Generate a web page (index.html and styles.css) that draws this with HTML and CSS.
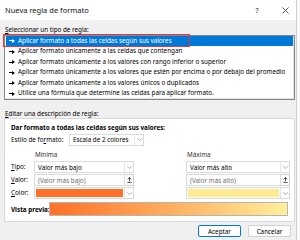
FILE: index.html
```html
<!DOCTYPE html>
<html lang="es">
<head>
<meta charset="utf-8">
<title>Nueva regla de formato</title>
<link rel="stylesheet" href="styles.css">
</head>
<body>
<div class="dlg">
  <div class="titlebar">
    <span class="title">Nueva regla de formato</span>
    <span class="help">?</span>
    <span class="close"><svg width="7" height="7" viewBox="0 0 7 7"><path d="M0.5 0.5L6.5 6.5M6.5 0.5L0.5 6.5" stroke="#333" stroke-width="0.8"/></svg></span>
  </div>
  <div class="body">
    <div class="lbl lbl-top"><u>S</u>eleccionar un tipo de regla:</div>
    <div class="listwrap">
      <ul class="list">
        <li class="sel"><i class="arr"></i>Aplicar formato a todas las celdas según sus valores</li>
        <li><i class="arr"></i>Aplicar formato únicamente a las celdas que contengan</li>
        <li><i class="arr"></i>Aplicar formato únicamente a los valores con rango inferior o superior</li>
        <li><i class="arr"></i>Aplicar formato únicamente a los valores que estén por encima o por debajo del promedio</li>
        <li><i class="arr"></i>Aplicar formato únicamente a los valores únicos o duplicados</li>
        <li><i class="arr"></i>Utilice una fórmula que determine las celdas para aplicar formato.</li>
      </ul>
      <div class="mark"></div>
    </div>
    <div class="lbl lbl-edit"><u>E</u>ditar una descripción de regla:</div>
    <div class="panel">
      <div class="bold head">Dar formato a todas las celdas según sus valores:</div>
      <div class="stylerow">
        <span class="stylelbl">Estilo de fo<u>r</u>mato:</span>
        <div class="combo stylecombo"><span class="ctext">Escala de 2 colores</span><span class="drop"><svg width="5" height="3" viewBox="0 0 5 3"><path d="M0.3 0.3L2.5 2.5L4.7 0.3" fill="none" stroke="#777" stroke-width="0.6"/></svg></span></div>
      </div>
      <div class="grid">
        <span></span><span class="colhead">Mínima</span><span></span><span class="colhead">Máxima</span>

        <span class="rowlbl"><u>T</u>ipo:</span>
        <div class="combo"><span class="ctext">Valor más bajo</span><span class="drop"><svg width="5" height="3" viewBox="0 0 5 3"><path d="M0.3 0.3L2.5 2.5L4.7 0.3" fill="none" stroke="#777" stroke-width="0.6"/></svg></span></div>
        <span></span>
        <div class="combo"><span class="ctext">Valor más alto</span><span class="drop"><svg width="5" height="3" viewBox="0 0 5 3"><path d="M0.3 0.3L2.5 2.5L4.7 0.3" fill="none" stroke="#777" stroke-width="0.6"/></svg></span></div>

        <span class="rowlbl"><u>V</u>alor:</span>
        <div class="inputrow"><span class="input">(Valor más bajo)</span><span class="pick"><svg width="5" height="6" viewBox="0 0 5 6"><path d="M2.5 0.6V4.2M0.8 2.2L2.5 0.6L4.2 2.2M0.4 5.4H4.6" fill="none" stroke="#222" stroke-width="0.8"/></svg></span></div>
        <span></span>
        <div class="inputrow"><span class="input">(Valor más alto)</span><span class="pick"><svg width="5" height="6" viewBox="0 0 5 6"><path d="M2.5 0.6V4.2M0.8 2.2L2.5 0.6L4.2 2.2M0.4 5.4H4.6" fill="none" stroke="#222" stroke-width="0.8"/></svg></span></div>

        <span class="rowlbl"><u>C</u>olor:</span>
        <div class="combo colorcombo"><span class="swatch sw-min"></span><span class="drop"><svg width="5" height="3" viewBox="0 0 5 3"><path d="M0.3 0.3L2.5 2.5L4.7 0.3" fill="none" stroke="#777" stroke-width="0.6"/></svg></span></div>
        <span></span>
        <div class="combo colorcombo"><span class="swatch sw-max"></span><span class="drop"><svg width="5" height="3" viewBox="0 0 5 3"><path d="M0.3 0.3L2.5 2.5L4.7 0.3" fill="none" stroke="#777" stroke-width="0.6"/></svg></span></div>
      </div>
      <div class="previewrow">
        <span class="bold pvlbl">Vista previa:</span>
        <div class="preview"></div>
      </div>
    </div>
    <div class="buttons">
      <button class="btn primary">Aceptar</button>
      <button class="btn">Cancelar</button>
    </div>
  </div>
  <span class="grip"></span>
</div>
</body>
</html>
```

FILE: styles.css
```css
* { box-sizing: border-box; }
body {
  margin: 0;
  width: 300px;
  height: 240px;
  overflow: hidden;
  background: #fafafa;
  font-family: "Noto Sans", "Open Sans", sans-serif;
  font-size: 6.3px;
  color: #000;
}
u { text-decoration: underline; text-underline-offset: 1px; text-decoration-thickness: 0.5px; }
.dlg {
  position: relative;
  width: 297px;
  height: 240px;
  background: #f0f0f0;
  border-right: 1px solid #cfcfcf;
  display: flex;
  flex-direction: column;
}
.titlebar {
  height: 20px;
  background: #fff;
  display: flex;
  align-items: center;
  padding-left: 5px;
  font-size: 7.5px;
  color: #111;
}
.title { flex: 1; }
.help { width: 14px; text-align: center; margin-right: 14px; font-size: 7px; color: #333; }
.close { width: 14px; display: flex; justify-content: center; margin-right: 4px; }
.body {
  flex: 1;
  display: flex;
  flex-direction: column;
  padding: 0 1px 0 4px;
}
.lbl { height: 10px; line-height: 10px; padding-left: 1px; white-space: nowrap; }
.lbl-top { margin-top: 5px; }
.listwrap { position: relative; }
.list {
  list-style: none;
  margin: 0;
  padding: 0 1px;
  height: 65px;
  background: #fff;
  border: 1px solid #828790;
  box-shadow: inset -1px -1px 0 #e3e3e3;
}
.list li {
  height: 10.5px;
  line-height: 10.5px;
  padding-left: 3px;
  white-space: nowrap;
  overflow: hidden;
  display: flex;
  align-items: center;
}
.list li.sel { background: #0078d7; color: #fff; height: 9.8px; margin-bottom: 0.7px; }
.arr {
  display: inline-block;
  width: 6px;
  height: 3px;
  margin-right: 3px;
  flex: none;
  background:
    linear-gradient(currentColor, currentColor) 0 1px / 3.5px 1px no-repeat;
  position: relative;
}
.arr::after {
  content: "";
  position: absolute;
  left: 3px;
  top: -0.5px;
  border-left: 3px solid currentColor;
  border-top: 2px solid transparent;
  border-bottom: 2px solid transparent;
}
.mark {
  position: absolute;
  left: -1px;
  top: -1px;
  width: 187px;
  height: 13px;
  border: 1.3px solid #e0383d;
}
.lbl-edit { margin-top: 9px; }
.panel {
  height: 104px;
  margin-top: -1px;
  background: #fff;
  border: 1px solid #dadada;
  padding: 4px 6px 0 6px;
}
.bold { font-weight: bold; white-space: nowrap; }
.head { height: 10px; line-height: 10px; }
.stylerow { display: flex; align-items: center; height: 13px; }
.stylelbl { width: 58px; white-space: nowrap; }
.combo {
  display: flex;
  align-items: center;
  height: 12px;
  background: #fff;
  border: 1px solid #dadada;
}
.ctext { flex: 1; padding-left: 3px; white-space: nowrap; overflow: hidden; }
.drop {
  width: 9px;
  height: 100%;
  display: flex;
  align-items: center;
  justify-content: center;
  border-left: 1px solid #e6e6e6;
}
.stylecombo { width: 75px; height: 12px; }
.grid {
  display: grid;
  grid-template-columns: 23px 100px 52px 104px;
  grid-template-rows: 11px 12px 12px 12px;
  row-gap: 1px;
  margin-top: 3px;
  align-items: center;
}
.colhead { color: #333; padding-left: 1px; }
.rowlbl { line-height: 12px; white-space: nowrap; }
.inputrow { display: flex; height: 12px; }
.input {
  flex: 1;
  display: flex;
  align-items: center;
  padding-left: 3px;
  color: #6d6d6d;
  border: 1px solid #dadada;
  background: #fff;
  white-space: nowrap;
}
.pick {
  width: 9px;
  display: flex;
  align-items: center;
  justify-content: center;
  border: 1px solid #cfcfcf;
  border-left: none;
  background: #fdfdfd;
}
.swatch { flex: 1; height: 100%; border: 1px solid #fff; }
.sw-min { background: #ff7128; }
.sw-max { background: #ffeb92; }
.previewrow {
  display: flex;
  align-items: center;
  margin-top: 3px;
}
.pvlbl { width: 38px; }
.preview {
  width: 240px;
  height: 14px;
  border: 1px solid #b5b5b5;
  background: linear-gradient(to right, #ff7128 0%, #ffad5e 50%, #ffef9c 100%);
}
.buttons {
  display: flex;
  justify-content: flex-end;
  gap: 7px;
  margin-top: 3px;
  padding-right: 4px;
}
.btn {
  width: 43px;
  height: 12px;
  padding: 0;
  font: inherit;
  color: #000;
  background: #fdfdfd;
  border: 1px solid #d0d0d0;
  border-radius: 2px;
}
.btn.primary { border: 1px solid #0078d7; }
.grip {
  position: absolute;
  right: 1px;
  bottom: 1px;
  width: 4px;
  height: 4px;
  background: radial-gradient(#aaa 0.5px, transparent 0.7px) 0 0 / 2px 2px;
}
```
